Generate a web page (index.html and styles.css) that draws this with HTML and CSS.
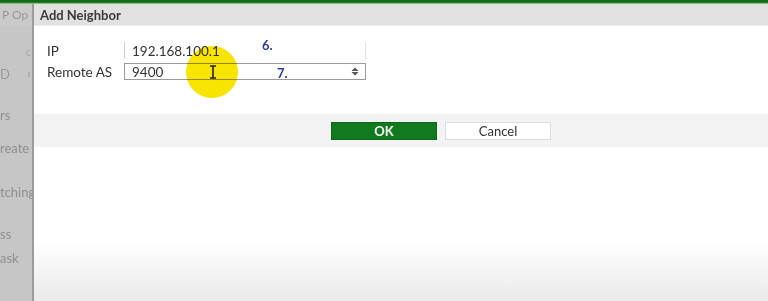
FILE: index.html
```html
<!DOCTYPE html>
<html>
<head>
<meta charset="utf-8">
<link rel="stylesheet" href="styles.css">
</head>
<body>
<div class="app">
  <div class="topbar"></div>
  <div class="main">
    <div class="sidebar">
      <div class="side-head">P Op</div>
      <div class="side-row side-r1"><span class="cut-a"></span><span class="cut-b">c</span></div>
      <div class="side-row side-r2"><span class="cut-a">D</span><span class="cut-b tick"></span></div>
      <div class="side-item s1">rs</div>
      <div class="side-item s2">reate</div>
      <div class="side-item s3">tching</div>
      <div class="side-item s4">ss</div>
      <div class="side-item s5">ask</div>
    </div>
    <div class="dialog">
      <div class="dlg-head">Add Neighbor</div>
      <div class="dlg-body">
        <div class="row">
          <div class="label">IP</div>
          <div class="field ro">192.168.100.1</div>
        </div>
        <div class="row">
          <div class="label">Remote AS</div>
          <div class="field input">
            <span>9400</span>
            <svg class="spin" width="8" height="9" viewBox="0 0 8 9"><path d="M4 0.5 L7.5 4 H0.5 Z M0.5 5 H7.5 L4 8.5 Z" fill="#555"/></svg>
          </div>
        </div>
      </div>
      <div class="dlg-foot">
        <button class="btn ok">OK</button>
        <button class="btn cancel">Cancel</button>
      </div>
      <div class="dlg-rest"></div>
    </div>
  </div>
  <div class="highlight"></div>
  <svg class="ibeam" width="8" height="14" viewBox="0 0 8 14"><path d="M1 1 H7 M4 1 V13 M1 13 H7" stroke="#222" stroke-width="1.6" fill="none"/></svg>
  <div class="note n6">6.</div>
  <div class="note n7">7.</div>
</div>
</body>
</html>
```
FILE: styles.css
```css
* { box-sizing: border-box; }
html, body { margin: 0; padding: 0; }
body {
  width: 768px;
  height: 301px;
  overflow: hidden;
  font-family: Lato, "Open Sans", sans-serif;
  background: #fff;
}
.app {
  position: relative;
  width: 768px;
  height: 301px;
  display: flex;
  flex-direction: column;
}
.topbar {
  height: 4px;
  background: linear-gradient(#136a1b 0, #136a1b 2px, #3c8f3f 3px, #cfe6cc 4px);
  flex: none;
}
.main {
  flex: 1;
  display: flex;
  min-height: 0;
}
.sidebar {
  width: 34px;
  flex: none;
  background: #c6c6c6;
  border-right: 2px solid #9b9b9b;
  color: #8a8a8a;
  font-size: 13px;
  overflow: hidden;
  white-space: nowrap;
  display: flex;
  flex-direction: column;
}
.side-head {
  height: 22px;
  line-height: 22px;
  padding-left: 2px;
  font-size: 12px;
  color: #999;
  background: #cacaca;
}
.side-row {
  height: 22px;
  display: flex;
  justify-content: space-between;
  align-items: center;
}
.side-r1 { margin-top: 14px; }
.side-r2 { margin-top: 1px; font-size: 13px; color: #999; }
.cut-b { padding-right: 1px; font-size: 11px; color: #aaa; }
.tick { width: 2px; height: 5px; background: #b0b0b0; margin-right: 2px; }
.side-item { line-height: 16px; color: #8f8f8f; }
.s1 { margin-top: 22px; }
.s2 { margin-top: 17px; }
.s3 { margin-top: 28px; }
.s4 { margin-top: 26px; }
.s5 { margin-top: 8px; }
.dialog {
  flex: 1;
  display: flex;
  flex-direction: column;
  min-width: 0;
}
.dlg-head {
  height: 22px;
  line-height: 22px;
  background: #e1e1e1;
  border-bottom: 1px solid #ececec;
  padding-left: 6px;
  font-size: 13px;
  font-weight: 700;
  color: #3a3a3a;
  flex: none;
}
.dlg-body {
  padding: 16px 0 0 13px;
  display: flex;
  flex-direction: column;
  gap: 4px;
  height: 88px;
  flex: none;
}
.row {
  display: flex;
  align-items: center;
  height: 17px;
}
.label {
  width: 77px;
  font-size: 13.5px;
  color: #333;
}
.field {
  width: 242px;
  height: 17px;
  font-size: 13.5px;
  color: #333;
  display: flex;
  align-items: center;
  justify-content: space-between;
  padding: 0 6px 0 7px;
}
.ro {
  border-left: 1px solid #d0d0d0;
  border-right: 1px solid #e4e4e4;
}
.input {
  border: 1px solid #9a9a9a;
  background: #fff;
}
.spin { display: block; }
.dlg-foot {
  height: 33px;
  flex: none;
  background: #f3f3f3;
  display: flex;
  align-items: center;
  gap: 8px;
  padding-left: 297px;
}
.btn {
  width: 106px;
  height: 18px;
  font-family: Lato, "Open Sans", sans-serif;
  font-size: 13px;
  padding: 0;
  margin: 0;
  border-radius: 0;
}
.ok {
  background: #117a1e;
  border: 1px solid #0c6a17;
  color: #fff;
  font-weight: 700;
}
.cancel {
  background: #fff;
  border: 1px solid #dcdcdc;
  color: #333;
}
.dlg-rest {
  flex: 1;
  background: linear-gradient(#ffffff 0, #ffffff 95px, #ebebeb 150px);
}
.highlight {
  position: absolute;
  left: 186px;
  top: 46px;
  width: 52px;
  height: 52px;
  border-radius: 50%;
  background: #f7e500;
  mix-blend-mode: multiply;
}
.ibeam {
  position: absolute;
  left: 209px;
  top: 65px;
}
.note {
  position: absolute;
  font-size: 13px;
  font-weight: 700;
  color: #2b3b9e;
}
.n6 { left: 262px; top: 37px; }
.n7 { left: 277px; top: 65px; }
```
